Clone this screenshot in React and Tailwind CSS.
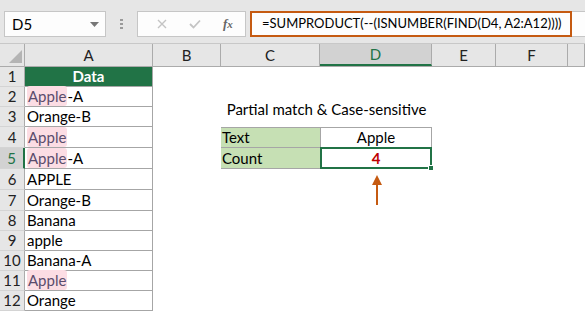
import React from "react";

const font = { fontFamily: "Lato, 'Open Sans', sans-serif" };

const cols = [
  { k: "A", w: "w-[128px]" },
  { k: "B", w: "w-[68px]" },
  { k: "C", w: "w-[99px]" },
  { k: "D", w: "w-[112px]" },
  { k: "E", w: "w-[64px]" },
  { k: "F", w: "w-[72px]" },
  { k: "", w: "flex-1" },
];

const rowH = ["h-[20px]", "h-[20px]", "h-[20px]", "h-[21px]", "h-[21px]", "h-[21px]", "h-[21px]", "h-[20px]", "h-[20px]", "h-[20px]", "h-[20px]", "h-[20px]"];

const Hl = ({ children }) => (
  <span className="bg-[#fcdde4] text-[#5a4c6c] rounded-[3px] px-[1px] py-[1px]">{children}</span>
);

const aData = [
  <span className="text-white font-bold">Data</span>,
  <><Hl>Apple</Hl>-A</>,
  <>Orange-B</>,
  <Hl>Apple</Hl>,
  <><Hl>Apple</Hl>-A</>,
  <>APPLE</>,
  <>Orange-B</>,
  <>Banana</>,
  <>apple</>,
  <>Banana-A</>,
  <Hl>Apple</Hl>,
  <>Orange</>,
];

export default function App() {
  return (
    <div className="w-[585px] h-[312px] overflow-hidden bg-white text-[15px] text-black" style={font}>
      {/* Top formula bar */}
      <div className="h-[44px] bg-[#e6e6e6] flex items-start pt-[11px] pl-[4px] border-b border-[#c8c8c8]">
        <div className="w-[102px] h-[26px] bg-[#fdfdfd] border border-[#c6c6c6] flex items-center pl-[7px] pr-[6px] justify-between">
          <span className="text-[15px]">D5</span>
          <svg width="9" height="5" viewBox="0 0 9 5"><path d="M0 0H9L4.5 5Z" fill="#777" /></svg>
        </div>
        <div className="w-[31px] h-[26px] flex flex-col items-center justify-center gap-[2px]">
          <span className="w-[3px] h-[2px] bg-[#9a9a9a]" />
          <span className="w-[3px] h-[2px] bg-[#9a9a9a]" />
          <span className="w-[3px] h-[2px] bg-[#9a9a9a]" />
        </div>
        <div className="w-[109px] h-[26px] bg-[#fdfdfd] border border-[#c6c6c6] flex items-center">
          <svg className="ml-[19px]" width="10" height="10" viewBox="0 0 10 10"><path d="M1 1L9 9M9 1L1 9" stroke="#c4c4c4" strokeWidth="1.4" /></svg>
          <svg className="ml-[22px]" width="12" height="10" viewBox="0 0 12 10"><path d="M1 5L4.5 8.5L11 1.5" stroke="#c4c4c4" strokeWidth="1.8" fill="none" /></svg>
          <span className="ml-[22px] text-[#666] italic text-[13px] font-semibold" style={{ fontFamily: "'Liberation Serif', serif" }}>f<span className="text-[11px]">x</span></span>
        </div>
        <div className="flex-1 h-[26px] bg-[#fdfdfd] border-t border-b border-[#c6c6c6] ml-[4px] flex">
          <div className="w-[322px] h-[26px] -mt-[1px] border-2 border-[#c55a11] flex items-center pl-[10px] text-[13px] whitespace-nowrap overflow-hidden">
            =SUMPRODUCT(--(ISNUMBER(FIND(D4, A2:A12))))
          </div>
        </div>
      </div>

      {/* Column header row */}
      <div className="flex h-[23px] bg-[#e6e6e6] border-b border-[#ababab]">
        <div className="w-[25px] border-r border-[#ababab] relative">
          <svg className="absolute left-[9px] top-[6px]" width="13" height="13" viewBox="0 0 13 13"><path d="M13 0V13H0Z" fill="#b4b4b4" /></svg>
        </div>
        {cols.map((c) =>
          c.k === "D" ? (
            <div key={c.k} className={`${c.w} bg-[#d2d2d2] border-r border-[#ababab] border-b-2 border-b-[#217346] flex items-center justify-center text-[#217346] text-[15px]`}>
              D
            </div>
          ) : (
            <div key={c.k || "g"} className={`${c.w} border-r border-[#ababab] flex items-center justify-center text-[15px] text-[#222]`}>
              {c.k}
            </div>
          )
        )}
      </div>

      {/* Rows */}
      {rowH.map((h, i) => {
        const r = i + 1;
        const sel = r === 5;
        return (
          <div key={r} className={`flex ${h}`}>
            <div className={`w-[25px] flex items-center justify-center text-[15px] border-b border-[#d4d4d4] ${sel ? "bg-[#d2d2d2] text-[#217346] border-r-2 border-r-[#217346]" : "bg-[#e6e6e6] text-[#222] border-r border-r-[#ababab]"}`}>
              {r}
            </div>
            <div className={`w-[128px] flex items-center border-r border-b border-[#a6a6a6] ${r === 1 ? "bg-[#217346] justify-center border-[#217346] border-b-[#a6a6a6]" : "pl-[2px]"}`}>
              <span className="leading-none">{aData[i]}</span>
            </div>
            <div className="w-[68px]" />
            {r === 3 ? (
              <div className="w-[211px] flex items-start justify-center -mt-[8px] text-[15px] leading-[20px]">Partial match &amp; Case-sensitive</div>
            ) : r === 4 ? (
              <>
                <div className="w-[99px] bg-[#c6e0b4] border-t border-b border-[#a6a6a6] flex items-center pl-[1px]">Text</div>
                <div className="w-[112px] border-t border-b border-r border-l border-[#a6a6a6] flex items-center justify-center">Apple</div>
              </>
            ) : r === 5 ? (
              <>
                <div className="w-[99px] bg-[#c6e0b4] border-b border-[#a6a6a6] flex items-center pl-[1px]">Count</div>
                <div className="w-[112px] border-2 border-[#217346] flex items-center justify-center relative -mt-[1px]">
                  <span className="text-[#c00000] font-bold">4</span>
                  <span className="absolute right-[-4px] bottom-[-4px] w-[6px] h-[6px] bg-[#217346] border border-white" />
                </div>
              </>
            ) : r === 6 ? (
              <div className="flex-1 relative">
                <svg className="absolute left-[150px] top-[6px]" width="12" height="32" viewBox="0 0 12 32">
                  <path d="M6 0L11 10H7V30H5V10H1Z" fill="#c55a11" />
                </svg>
              </div>
            ) : null}
          </div>
        );
      })}
    </div>
  );
}
